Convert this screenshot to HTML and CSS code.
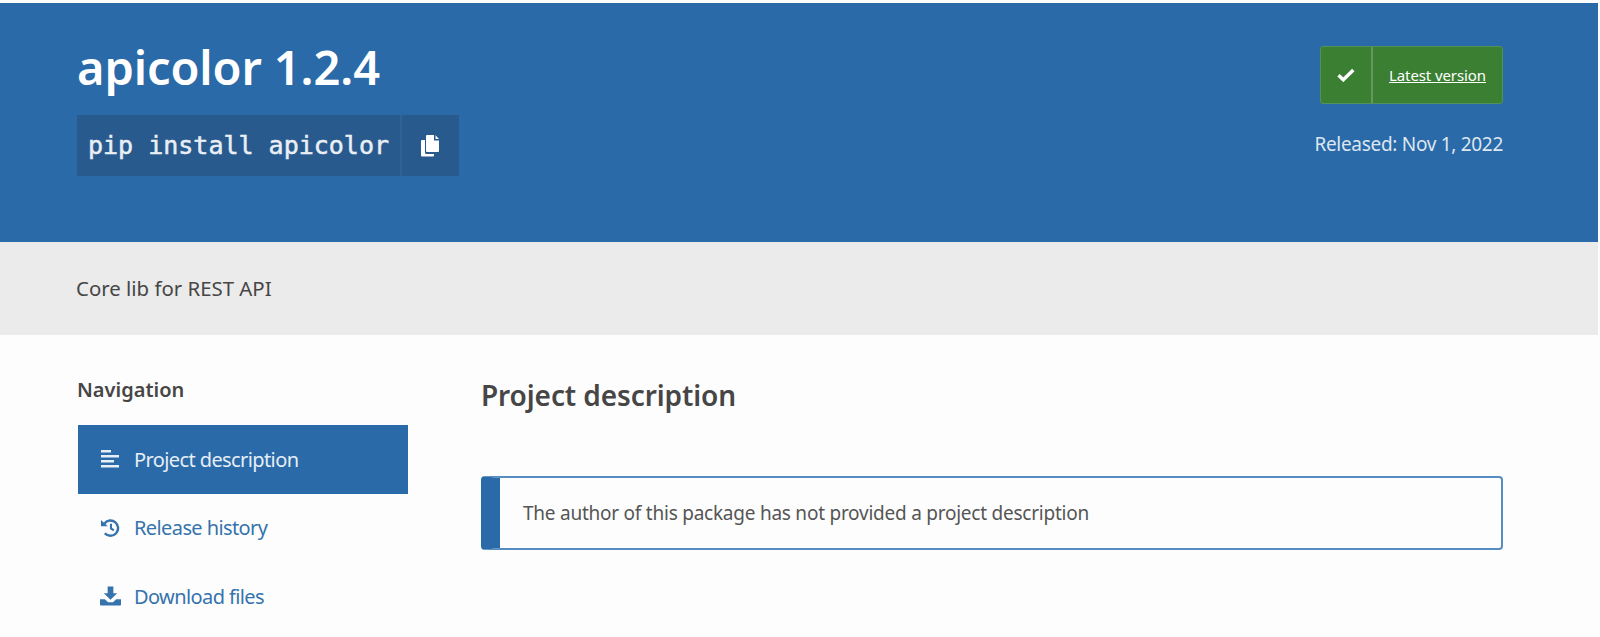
FILE: index.html
```html
<!DOCTYPE html>
<html lang="en">
<head>
    <meta charset="UTF-8">
    <meta name="viewport" content="width=device-width, initial-scale=1.0">
    <title>apicolor 1.2.4</title>
    <link rel="stylesheet" href="styles.css">
</head>
<body>

<header class="banner">
    <div class="banner-left">
        <h1>apicolor 1.2.4</h1>
        <div class="pip-box">
            <span class="pip-command">pip install apicolor</span>
            <span class="pip-copy">
                <svg width="20" height="22" viewBox="0 0 20 22" aria-hidden="true">
                    <path fill="#fff" d="M6 0h7v5.500h5V16a1 1 0 0 1-1 1H6a1 1 0 0 1-1-1V1a1 1 0 0 1 1-1z"/>
                    <path fill="#fff" d="M14.500 0.300 18 4h-3.500z"/>
                    <path fill="#fff" d="M1 5h3v12.500A1.500 1.500 0 0 0 5.500 19H13v1.500a1 1 0 0 1-1 1H1a1 1 0 0 1-1-1V6a1 1 0 0 1 1-1z"/>
                </svg>
            </span>
        </div>
    </div>
    <div class="banner-right">
        <a class="latest-btn" href="#">
            <span class="latest-icon">
                <svg width="18" height="14" viewBox="0 0 18 14" aria-hidden="true">
                    <path fill="none" stroke="#fff" stroke-width="3.400" d="M1.500 7.200 6.300 11.800 16.300 2"/>
                </svg>
            </span>
            <span class="latest-label">Latest version</span>
        </a>
        <p class="released">Released: Nov 1, 2022</p>
    </div>
</header>

<div class="summary">Core lib for REST API</div>

<main class="content">
    <nav class="sidebar">
        <h3>Navigation</h3>
        <a class="nav-item active" href="#">
            <svg class="nav-icon" width="21" height="20" viewBox="0 0 21 20" aria-hidden="true">
                <path fill="currentColor" d="M1 1h10v2.400H1zM1 6h18v2.400H1zM1 11h13v2.400H1zM1 16h18v2.400H1z"/>
            </svg>
            Project description
        </a>
        <a class="nav-item" href="#">
            <svg class="nav-icon" width="21" height="20" viewBox="0 0 22 20" aria-hidden="true">
                <path fill="none" stroke="currentColor" stroke-width="2.600" d="M4.500 5.500A8 8 0 1 1 5 15.500"/>
                <path fill="currentColor" d="M1 1.500 8.200 8.200H1z"/>
                <path fill="none" stroke="currentColor" stroke-width="2.200" d="M11.500 5.500v5l3 2"/>
            </svg>
            Release history
        </a>
        <a class="nav-item" href="#">
            <svg class="nav-icon" width="21" height="20" viewBox="0 0 22 20" aria-hidden="true">
                <path fill="currentColor" d="M8 0h6v7h4l-7 7-7-7h4z"/>
                <path fill="currentColor" d="M0 13.500h5l3.500 3h5l3.500-3h5V19a1 1 0 0 1-1 1H1a1 1 0 0 1-1-1z"/>
            </svg>
            Download files
        </a>
    </nav>

    <section class="description">
        <h2>Project description</h2>
        <div class="callout">The author of this package has not provided a project description</div>
    </section>
</main>

</body>
</html>
```

FILE: styles.css
```css
* {
    margin: 0;
    padding: 0;
    box-sizing: border-box;
}

body {
    font-family: 'Noto Sans', Arial, sans-serif;
    background-color: #fdfdfd;
    color: #464646;
    padding-right: 2px;
    overflow: hidden;
}

a {
    text-decoration: none;
}

.banner {
    background-color: #2a6aa8;
    color: white;
    margin-top: 3px;
    height: 239px;
    padding: 34px 95px 0 77px;
    display: flex;
    justify-content: space-between;
    align-items: flex-start;
}

.banner h1 {
    font-size: 47px;
    line-height: 60px;
    font-weight: 600;
    letter-spacing: -0.1px;
}

.pip-box {
    display: flex;
    margin-top: 18px;
    height: 61px;
    background-color: #285a8d;
}

.pip-command {
    font-family: 'DejaVu Sans Mono', 'Liberation Mono', monospace;
    font-size: 25px;
    line-height: 61px;
    padding: 0 11px;
    color: #e9eff5;
    width: 323px;
    white-space: nowrap;
    -webkit-text-stroke: 0.5px #e9eff5;
}

.pip-copy {
    width: 59px;
    display: flex;
    align-items: center;
    justify-content: center;
    border-left: 2px solid #2f6299;
}

.banner-right {
    display: flex;
    flex-direction: column;
    align-items: flex-end;
    padding-top: 9px;
}

.latest-btn {
    display: flex;
    width: 183px;
    height: 58px;
    background-color: #3b7f33;
    border: 1px solid #52905a;
    border-radius: 3px;
    color: white;
}

.latest-icon {
    width: 52px;
    display: flex;
    align-items: center;
    justify-content: center;
    border-right: 2px solid #63985f;
}

.latest-label {
    flex: 1;
    text-align: center;
    font-size: 15px;
    line-height: 56px;
    text-decoration: underline;
    letter-spacing: -0.1px;
}

.released {
    font-size: 19px;
    line-height: 26px;
    margin-top: 27px;
    color: #dde7f1;
    letter-spacing: -0.3px;
}

.summary {
    background-color: #ebebeb;
    height: 93px;
    padding-left: 76px;
    font-size: 20.400px;
    line-height: 93px;
}

.content {
    display: flex;
    padding: 0 95px 0 78px;
}

.sidebar {
    width: 330px;
    flex-shrink: 0;
}

.sidebar h3 {
    font-size: 20px;
    font-weight: 600;
    line-height: 26px;
    margin: 42px 0 22px -1px;
}

.nav-item {
    display: flex;
    align-items: center;
    gap: 13px;
    height: 68.500px;
    padding-left: 22px;
    font-size: 20px;
    letter-spacing: -0.6px;
    color: #3573ad;
}

.nav-item.active {
    background-color: #2a6aa8;
    color: #e6eef6;
}

.nav-icon {
    flex-shrink: 0;
}

.description {
    flex: 1;
    margin-left: 73px;
}

.description h2 {
    font-size: 28px;
    font-weight: 600;
    line-height: 36px;
    margin-top: 42px;
    letter-spacing: -0.1px;
}

.callout {
    margin-top: 63px;
    height: 74px;
    border: 2px solid #558dc2;
    border-left: 19px solid #2a6aa8;
    border-radius: 4px;
    padding-left: 23px;
    font-size: 19px;
    line-height: 70px;
    letter-spacing: -0.24px;
    color: #555;
}
```
